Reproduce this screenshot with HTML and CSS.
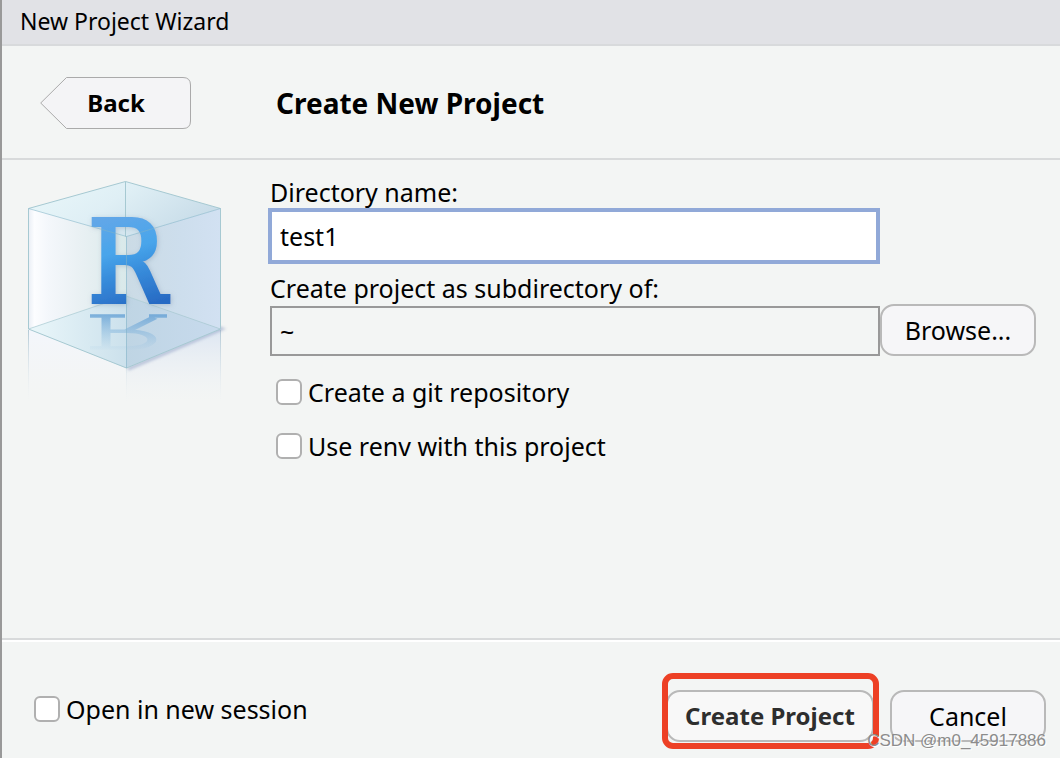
FILE: index.html
```html
<!DOCTYPE html>
<html lang="en">
<head>
<meta charset="utf-8">
<title>New Project Wizard</title>
<link rel="stylesheet" href="styles.css">
</head>
<body>
<div class="wizard">
  <header class="titlebar">New Project Wizard</header>
  <div class="heading">
    <button class="back" type="button">
      <svg class="back-shape" viewBox="0 0 152 52" aria-hidden="true"><path d="M26.5 .5H143Q150.500 .5 150.500 8V44Q150.500 51.500 143 51.500H26.500L.7 26Z" fill="#f4f4f6" stroke="#aaa"/></svg>
      <span class="back-label">Back</span>
    </button>
    <h1 class="heading-title">Create New Project</h1>
  </div>
  <main class="content">
    <svg class="logo" width="220" height="240" viewBox="10 170 220 240" role="img" aria-label="R cube">
      <defs>
        <linearGradient id="top" x1="0" x2="1" y2=".4"><stop stop-color="#eaf8fa"/><stop offset=".5" stop-color="#dfeff5"/><stop offset="1" stop-color="#c9dde9"/></linearGradient>
        <linearGradient id="left"><stop stop-color="#e9eef5"/><stop offset=".06" stop-color="#fcfdff"/><stop offset=".2" stop-color="#f4f7fb"/><stop offset=".5" stop-color="#eaf1f4"/><stop offset="1" stop-color="#d9e9ea"/></linearGradient>
        <linearGradient id="right"><stop stop-color="#cbdbe5"/><stop offset=".6" stop-color="#cddeed"/><stop offset="1" stop-color="#d2e1f2"/></linearGradient>
        <linearGradient id="floorL"><stop stop-color="#eaf7fa"/><stop offset="1" stop-color="#cce1ec"/></linearGradient>
        <linearGradient id="floorR"><stop stop-color="#bfd5e4"/><stop offset="1" stop-color="#c7daed"/></linearGradient>
        <linearGradient id="ink" gradientUnits="userSpaceOnUse" x1="112" y1="216" x2="138" y2="307"><stop stop-color="#62a7e8"/><stop offset=".38" stop-color="#48a5eb"/><stop offset=".6" stop-color="#398fdd"/><stop offset="1" stop-color="#286bc4"/></linearGradient>
        <linearGradient id="echo" gradientUnits="userSpaceOnUse" x1="0" y1="304" x2="0" y2="216"><stop stop-color="#5b9bd3" stop-opacity=".75"/><stop offset="1" stop-color="#8bbce0" stop-opacity=".05"/></linearGradient>
        <linearGradient id="fadeL" x2="0" y2="1"><stop stop-color="#f3f6fc"/><stop offset="1" stop-color="#f3f5f7" stop-opacity="0"/></linearGradient>
        <linearGradient id="fadeR" x2="0" y2="1"><stop stop-color="#dde6f2"/><stop offset="1" stop-color="#eef2f6" stop-opacity="0"/></linearGradient>
        <linearGradient id="edge" gradientUnits="userSpaceOnUse" x1="0" y1="330" x2="0" y2="402"><stop stop-color="#b4cad5"/><stop offset="1" stop-color="#e8eef1" stop-opacity="0"/></linearGradient>
        <filter id="soft" x="-20%" y="-20%" width="140%" height="140%"><feGaussianBlur stdDeviation="1.500"/></filter>
        <filter id="glow" x="-20%" y="-20%" width="140%" height="140%"><feDropShadow dx="1" dy="1" stdDeviation="2.500" flood-color="#7890a8" flood-opacity=".4"/></filter>
      </defs>
      <path d="M28 329L126 368V402H28Z" fill="url(#fadeL)"/>
      <path d="M126 368L221 329V402H126Z" fill="url(#fadeR)"/>
      <path d="M28.500 330V402M126.500 368V402M220.500 330V402" stroke="url(#edge)" fill="none"/>
      <path d="M150 304L222 329L128 369" fill="none" stroke="#8f9fc4" stroke-width="3" opacity=".6" filter="url(#soft)"/>
      <path d="M28.500 208.500L126 236V296L28.500 329Z" fill="url(#left)"/>
      <path d="M126 236L220.500 208.500V329L126 296Z" fill="url(#right)"/>
      <path d="M28.500 208.500L125.500 181.500L220.500 208.500L126.500 236.500Z" fill="url(#top)"/>
      <path d="M28.500 329L126 296V368Z" fill="url(#floorL)"/>
      <path d="M126 296L220.500 329L126 368Z" fill="url(#floorR)"/>
      <g fill="none" stroke="#a6c9d2">
        <path d="M28.500 208.500L125.500 181.500L220.500 208.500V329L126.500 368L28.500 329ZM125.500 181.500V236.500"/>
        <path d="M28.500 329L126 296L220.500 329" opacity=".7"/>
      </g>
      <g fill="none" stroke="url(#echo)" stroke-width="9" transform="translate(0 436) scale(1 -.4)">
        <path d="M90 300H125M149 300H167M106 296V224M154 296L127 262M90 220H128C160 220 160 262 127 262H110"/>
      </g>
      <text class="logo-letter" x="127" y="302" text-anchor="middle" fill="url(#ink)" stroke="url(#ink)" stroke-width="4" filter="url(#glow)">R</text>
      <path d="M28.500 208.500L126.500 236.500L220.500 208.500M126.500 236.500V368" fill="none" stroke="#7fb3c6" opacity=".55"/>
    </svg>
    <form class="fields" id="project">
      <label class="field-label" for="dir">Directory name:</label>
      <input class="text-input active" id="dir" type="text" value="test1">
      <label class="field-label second" for="parent">Create project as subdirectory of:</label>
      <input class="text-input" id="parent" type="text" value="~" readonly>
      <button class="button browse" type="button">Browse...</button>
      <div class="options">
        <label class="check"><input class="box" type="checkbox">Create a git repository</label>
        <label class="check"><input class="box" type="checkbox">Use renv with this project</label>
      </div>
    </form>
  </main>
  <footer class="footer">
    <label class="check"><input class="box" type="checkbox">Open in new session</label>
    <div class="actions">
      <div class="marked"><button class="button primary" type="submit" form="project">Create Project</button></div>
      <button class="button" type="button">Cancel</button>
    </div>
    <span class="watermark">CSDN @m0_45917886</span>
  </footer>
</div>
</body>
</html>
```
FILE: styles.css
```css
* { box-sizing: border-box; }
body {
  margin: 0;
  background: #f3f5f4;
  color: #000;
  font-family: "Lucida Grande", "Noto Sans", sans-serif;
  font-size: 25px;
  line-height: 32px;
}
button, input { font: inherit; color: inherit; }
.wizard {
  display: flex;
  flex-direction: column;
  min-height: 100vh;
  border-left: 2px solid #999;
}
.titlebar {
  padding: 5px 18px 7px;
  background: #e1e2e6;
  border-bottom: 2px solid #d8dadc;
  font-size: 23px;
}
.heading {
  display: flex;
  align-items: center;
  gap: 84px;
  padding: 31px 38px 29px;
  border-bottom: 2px solid #d8dadb;
}
.back {
  display: grid;
  width: 152px;
  height: 52px;
  padding: 0;
  border: 0;
  background: none;
  font-size: 24px;
  font-weight: 700;
}
.back-shape, .back-label { grid-area: 1 / 1; }
.back-label { align-self: center; }
.heading-title { margin: 0; font-size: 28px; line-height: 36px; }
.content {
  flex: 1;
  display: grid;
  grid-template-columns: 220px 1fr;
  column-gap: 38px;
  align-items: start;
  padding: 10px 24px 10px 8px;
}
.logo-letter { font-family: "DejaVu Serif Condensed", "DejaVu Serif", serif; font-size: 115px; }
.fields {
  display: grid;
  grid-template-columns: 1fr 156px;
  padding-top: 6px;
}
.field-label { grid-column: 1; padding-left: 2px; }
.second { grid-column: 1 / 3; margin-top: 8px; }
.text-input {
  grid-column: 1;
  align-self: end;
  width: auto;
  min-width: 0;
  height: 50px;
  margin-left: 2px;
  padding: 0 8px;
  border: 2px solid #999;
  border-radius: 0;
  background: transparent;
  outline: 0;
}
.active {
  height: 56px;
  margin-left: 0;
  border: 4px solid #91a9d8;
  background: #fff;
}
.button {
  min-width: 156px;
  height: 52px;
  padding: 0 14px;
  border: 2px solid #b9b9b9;
  border-radius: 14px;
  background: #f6f6f8;
}
.primary { min-width: 208px; background: #f8f8f8; color: #2e2e2e; font-size: 24px; font-weight: 700; }
.options {
  grid-column: 1 / 3;
  display: grid;
  gap: 22px;
  justify-items: start;
  padding: 20px 8px 0;
}
.check { display: flex; align-items: center; gap: 6px; }
.box {
  appearance: none;
  width: 26px;
  height: 26px;
  margin: 0;
  border: 2px solid #b0b0b0;
  border-radius: 6px;
  background: #fff;
}
.box:checked { background: #91a9d8; }
.footer {
  position: relative;
  display: flex;
  justify-content: space-between;
  align-items: center;
  padding: 50px 14px 16px 32px;
  border-top: 2px solid #d8dadb;
  box-shadow: inset 0 2px #fff;
}
.footer > .check { align-self: flex-start; padding-top: 3px; }
.actions { display: flex; gap: 16px; }
.marked { position: relative; display: flex; }
.marked::after {
  content: "";
  position: absolute;
  inset: -17px -5px -7px -4px;
  border: 6px solid #ed4025;
  border-radius: 11px;
  pointer-events: none;
}
.watermark {
  position: absolute;
  right: 14px;
  bottom: 6px;
  color: #8c8c8c;
  font: 17px/22px "Liberation Sans", sans-serif;
  text-shadow: 1px 1px #fff;
  pointer-events: none;
}
```
